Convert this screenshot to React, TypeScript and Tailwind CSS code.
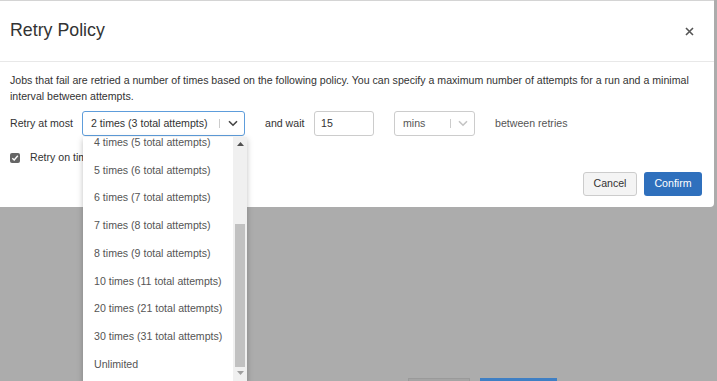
import { useState } from 'react';

const RETRY_OPTIONS = [
  '4 times (5 total attempts)',
  '5 times (6 total attempts)',
  '6 times (7 total attempts)',
  '7 times (8 total attempts)',
  '8 times (9 total attempts)',
  '10 times (11 total attempts)',
  '20 times (21 total attempts)',
  '30 times (31 total attempts)',
  'Unlimited',
];

function Chevron({ color }: { color: string }) {
  return (
    <svg width="10" height="7" viewBox="0 0 10 7" fill="none">
      <path d="M1 1.2 5 5.2 9 1.2" stroke={color} strokeWidth="1.6" />
    </svg>
  );
}

export default function App() {
  const [retryOnTimeout, setRetryOnTimeout] = useState(true);

  return (
    <div className="relative w-[717px] h-[381px] overflow-hidden bg-[#acacac] text-[#333] font-['Liberation_Sans',Arial,sans-serif]">
      {/* page beneath the overlay */}
      <div className="absolute left-[408px] top-[378px] w-[62px] h-[6px] bg-[#a4a4a4] border border-[#9a9a9a]" />
      <div className="absolute left-[480px] top-[378px] w-[77px] h-[6px] bg-[#3f7fc4]" />

      <div className="w-[714px] bg-white border-t border-[#d4d4d4] rounded-br-[4px]">
        {/* header */}
        <div className="h-[61px] flex items-center justify-between pl-[10px] pr-[20px] border-b border-[#e8e8e8]">
          <h1 className="text-[17.8px] text-[#333] leading-none">Retry Policy</h1>
          <svg width="9" height="9" viewBox="0 0 9 9" className="mt-[1px]">
            <path d="M1 1 8 8M8 1 1 8" stroke="#555" strokeWidth="1.6" />
          </svg>
        </div>

        {/* body */}
        <div className="pl-[10px] pr-[12px] pt-[10px] pb-[11px] text-[10.6px]">
          <p className="leading-[16px] text-[#333]">
            Jobs that fail are retried a number of times based on the following policy. You can specify a maximum number of attempts for a run and a minimal interval between attempts.
          </p>

          <div className="flex items-center h-[25px] mt-[7px]">
            <span className="w-[72px]">Retry at most</span>
            <div className="flex items-center w-[163px] h-[25px] border border-[#5e9ddb] rounded-[3px] pl-[8px] pr-[6px]">
              <span className="flex-1">2 times (3 total attempts)</span>
              <span className="w-px h-[9px] bg-[#ccc] mr-[8px]" />
              <Chevron color="#444" />
            </div>
            <span className="ml-[20px] w-[49px]">and wait</span>
            <div className="flex items-center w-[60px] h-[25px] border border-[#ccc] rounded-[3px] pl-[6px]">15</div>
            <div className="flex items-center ml-[20px] w-[81px] h-[25px] border border-[#ccc] rounded-[3px] pl-[8px] pr-[6px]">
              <span className="flex-1 text-[#555]">mins</span>
              <span className="w-px h-[9px] bg-[#ccc] mr-[7px]" />
              <Chevron color="#c4c4c4" />
            </div>
            <span className="ml-[20px] text-[#555]">between retries</span>
          </div>

          <label className="flex items-center h-[16px] mt-[14px] cursor-pointer">
            <span
              onClick={() => setRetryOnTimeout(!retryOnTimeout)}
              className="w-[10px] h-[10px] rounded-[2px] bg-[#666] flex items-center justify-center"
            >
              {retryOnTimeout && (
                <svg width="8" height="8" viewBox="0 0 8 8">
                  <path d="M1.3 4.2 3.2 6 6.8 1.8" stroke="white" strokeWidth="1.4" fill="none" />
                </svg>
              )}
            </span>
            <span className="ml-[10px]">Retry on timeout</span>
          </label>

          <div className="flex justify-end gap-[7px] mt-[6px]">
            <button className="w-[54px] h-[24px] rounded-[3px] border border-[#ccc] bg-[#f4f4f4] text-[#333]">Cancel</button>
            <button className="w-[58px] h-[24px] rounded-[3px] bg-[#2f70bd] text-white">Confirm</button>
          </div>
        </div>
      </div>

      {/* open dropdown */}
      <div className="absolute left-[83px] top-[137px] w-[164px] h-[250px] bg-white flex shadow-[0_2px_6px_rgba(0,0,0,0.25)] text-[10.6px]">
        <div className="flex-1 overflow-hidden">
          <div className="mt-[-7.8px]">
            {RETRY_OPTIONS.map(o => (
              <div key={o} className="h-[27.7px] flex items-center pl-[11px] text-[#555]">{o}</div>
            ))}
          </div>
        </div>
        <div className="w-[14px] bg-[#f0f0f0] flex flex-col items-center pt-[5px]">
          <svg width="7" height="4" viewBox="0 0 7 4"><path d="M0 4 3.5 0 7 4Z" fill="#505050" /></svg>
          <div className="w-[10px] h-[143px] bg-[#c1c1c1] mt-[78px]" />
          <svg width="7" height="4" viewBox="0 0 7 4" className="mt-[4px]"><path d="M0 0 3.5 4 7 0Z" fill="#a0a0a0" /></svg>
        </div>
      </div>
    </div>
  );
}
